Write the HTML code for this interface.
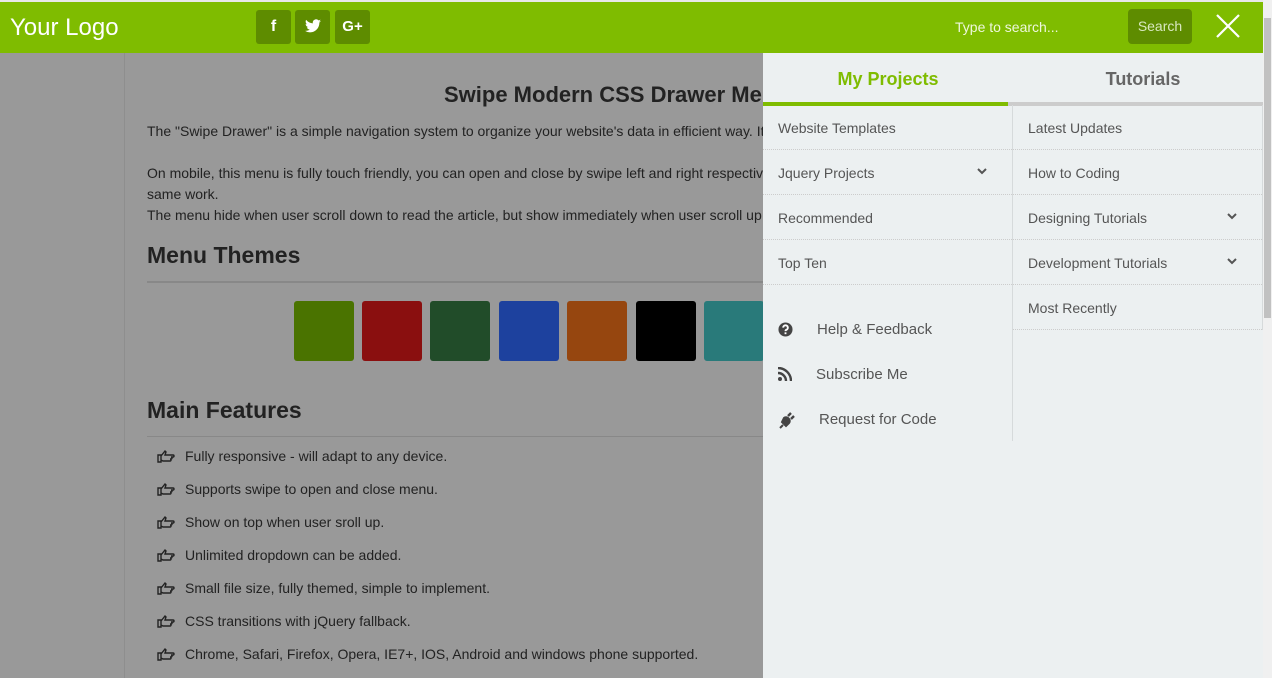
<!DOCTYPE html>
<html><head><meta charset="utf-8"><style>
*{box-sizing:border-box;margin:0;padding:0}
body{width:1272px;height:678px;overflow:hidden;background:#999;font-family:"Liberation Sans",sans-serif;position:relative;color:#2a2a2a}
.top{position:absolute;left:0;top:0;width:1263px;height:2px;background:#e8e8e8}
.hdr{position:absolute;left:0;top:2px;width:1263px;height:51px;background:#7fbc00}
.logo{position:absolute;left:10px;top:12px;color:#fff;font-size:24px}
.soc{position:absolute;top:8px;width:35px;height:34px;background:#5e8c00;border-radius:3px;color:#fff;font-weight:bold;font-size:16px;text-align:center;line-height:34px}
.st{position:absolute;left:955px;top:17px;color:#eef7dc;font-size:14px}
.sb{position:absolute;left:1128px;top:7px;width:64px;height:35px;background:#5e8c00;border-radius:4px;color:#d8e8c0;font-size:14px;text-align:center;line-height:35px}
.x{position:absolute;left:1216px;top:12px}
.scroll{position:absolute;left:1263px;top:0;width:9px;height:678px;background:#f0f0f0}
.thumb{position:absolute;left:1264px;top:18px;width:7px;height:300px;background:#c1c1c1}
.lc{position:absolute;left:124px;top:53px;width:1px;height:625px;background:#8e8e8e}
.main{position:absolute;left:147px;top:53px;font-size:14px;color:#222}
h1{position:absolute;left:297px;top:29px;font-size:22px;white-space:nowrap;color:#222}
.p{position:absolute;white-space:nowrap}
h2{position:absolute;font-size:23px;white-space:nowrap;color:#222}
.hr{position:absolute;left:0;width:640px;height:2px;background:#888}
.sw{position:absolute;top:248px;width:60px;height:60px;border-radius:3px}
.li{position:absolute;left:10px;white-space:nowrap;font-size:14px}
.li svg{display:inline-block;margin-right:10px;vertical-align:-2px}
.dr{position:absolute;left:763px;top:53px;width:500px;height:625px;background:#ecf0f1}
.tab{position:absolute;top:0;height:52px;text-align:center;line-height:52px;font-weight:bold;font-size:18px}
.col{position:absolute;top:52px;width:250px}
.it{height:45px;border-bottom:1px dotted #ccc;line-height:46px;padding-left:15px;font-size:14px;color:#555;position:relative}
.chev{position:absolute;right:25px;top:18px}
.ex{height:45px;line-height:45px;padding-left:15px;font-size:15px;color:#555;position:relative}
.ex svg{position:absolute;left:15px;top:15px}
</style></head><body>
<div class="top"></div>
<div class="hdr">
<div class="logo">Your Logo</div>
<div class="soc" style="left:256px">f</div>
<div class="soc" style="left:295px"><svg width="16" height="14" viewBox="0 0 24 20" style="vertical-align:-2px"><path fill="#fff" d="M24 2.4a10 10 0 0 1-2.8.8A5 5 0 0 0 23.3.4a10 10 0 0 1-3.1 1.2A4.9 4.9 0 0 0 11.8 6 14 14 0 0 1 1.7.9a4.9 4.9 0 0 0 1.5 6.6A5 5 0 0 1 1 6.9a4.9 4.9 0 0 0 3.9 4.8 5 5 0 0 1-2.2.1 4.9 4.9 0 0 0 4.600 3.4A9.9 9.9 0 0 1 0 17.3 14 14 0 0 0 7.5 19.5c9 0 14-7.5 14-14v-.6A10 10 0 0 0 24 2.4z"/></svg></div>
<div class="soc" style="left:335px;font-size:15px">G+</div>
<div class="st">Type to search...</div>
<div class="sb">Search</div>
<svg class="x" width="24" height="24"><path d="M1 1L23 23M23 1L1 23" stroke="#fff" stroke-width="2.2"/></svg>
</div>
<div class="lc"></div>
<div class="main">
<h1>Swipe Modern CSS Drawer Menu</h1>
<div class="p" style="top:70px">The "Swipe Drawer" is a simple navigation system to organize your website's data in efficient way. It</div>
<div class="p" style="top:112px">On mobile, this menu is fully touch friendly, you can open and close by swipe left and right respectiv</div>
<div class="p" style="top:133px">same work.</div>
<div class="p" style="top:154px">The menu hide when user scroll down to read the article, but show immediately when user scroll up.</div>
<h2 style="top:189px">Menu Themes</h2>
<div class="hr" style="top:228px"></div>
<div class="sw" style="left:147px;background:#4a7300"></div>
<div class="sw" style="left:215px;background:#8a0f0f"></div>
<div class="sw" style="left:283px;background:#214c29"></div>
<div class="sw" style="left:352px;background:#1d419e"></div>
<div class="sw" style="left:420px;background:#96460f"></div>
<div class="sw" style="left:489px;background:#000"></div>
<div class="sw" style="left:557px;background:#297a7a"></div>
<h2 style="top:344px">Main Features</h2>
<div class="hr" style="top:383px;height:1px"></div>
<svg width="0" height="0" style="position:absolute"><defs><symbol id="hd" viewBox="0 0 18 14"><path d="M1 6h3v7H1zM4 7l4-5 1 1-1 3h8a1 1 0 0 1 0 2h-2a1 1 0 0 1 0 2h-1a1 1 0 0 1 0 2H6l-2-1" fill="none" stroke="#222" stroke-width="1.4"/></symbol></defs></svg>
<div class="li" style="top:395px"><svg width="18" height="14"><use href="#hd"/></svg>Fully responsive - will adapt to any device.</div>
<div class="li" style="top:428px"><svg width="18" height="14"><use href="#hd"/></svg>Supports swipe to open and close menu.</div>
<div class="li" style="top:461px"><svg width="18" height="14"><use href="#hd"/></svg>Show on top when user sroll up.</div>
<div class="li" style="top:494px"><svg width="18" height="14"><use href="#hd"/></svg>Unlimited dropdown can be added.</div>
<div class="li" style="top:527px"><svg width="18" height="14"><use href="#hd"/></svg>Small file size, fully themed, simple to implement.</div>
<div class="li" style="top:560px"><svg width="18" height="14"><use href="#hd"/></svg>CSS transitions with jQuery fallback.</div>
<div class="li" style="top:593px"><svg width="18" height="14"><use href="#hd"/></svg>Chrome, Safari, Firefox, Opera, IE7+, IOS, Android and windows phone supported.</div>
</div>
<div class="dr">
<div class="tab" style="left:0;width:250px;color:#7fbc00">My Projects</div>
<div class="tab" style="left:255px;width:250px;color:#666">Tutorials</div>
<div style="position:absolute;left:0;top:49px;width:245px;height:4px;background:#7fbc00"></div>
<div style="position:absolute;left:245px;top:49px;width:255px;height:4px;background:#ccc"></div>
<svg width="0" height="0" style="position:absolute"><defs><symbol id="cv" viewBox="0 0 10 7"><path d="M1 1l4 4 4-4" fill="none" stroke="#555" stroke-width="2"/></symbol></defs></svg>
<div class="col" style="left:0;border-right:1px solid #d6dadb;height:336px">
<div class="it">Website Templates</div>
<div class="it">Jquery Projects<svg class="chev" width="10" height="7"><use href="#cv"/></svg></div>
<div class="it">Recommended</div>
<div class="it">Top Ten</div>
<div style="height:22px"></div>
<div class="ex"><svg width="15" height="15" viewBox="0 0 16 16"><circle cx="8" cy="8" r="7.5" fill="#444"/><path d="M5.5 6a2.5 2.5 0 1 1 3.5 2.3c-.7.3-1 .7-1 1.4" fill="none" stroke="#fff" stroke-width="2"/><rect x="7" y="11" width="2" height="2" fill="#fff"/></svg><span style="margin-left:39px">Help &amp; Feedback</span></div>
<div class="ex"><svg width="14" height="14" viewBox="0 0 14 14"><circle cx="2" cy="12" r="2" fill="#444"/><path d="M0 6a8 8 0 0 1 8 8M0 1a13 13 0 0 1 13 13" fill="none" stroke="#444" stroke-width="2.4"/></svg><span style="margin-left:38px">Subscribe Me</span></div>
<div class="ex"><svg width="18" height="17" viewBox="0 0 18 17"><path d="M2 16l3-3M4 10l4 4 3-3c1-1 1-3 0-4L10 6c-1-1-3-1-4 0z" fill="#444" stroke="#444" stroke-width="2"/><path d="M10 4l3-3M13 7l3-3" stroke="#444" stroke-width="2.4"/></svg><span style="margin-left:41px">Request for Code</span></div>
</div>
<div class="col" style="left:250px;border-right:1px solid #d6dadb">
<div class="it">Latest Updates</div>
<div class="it">How to Coding</div>
<div class="it">Designing Tutorials<svg class="chev" width="10" height="7"><use href="#cv"/></svg></div>
<div class="it">Development Tutorials<svg class="chev" width="10" height="7"><use href="#cv"/></svg></div>
<div class="it">Most Recently</div>
</div>
</div>
<div class="scroll"></div><div class="thumb"></div>
</body></html>
